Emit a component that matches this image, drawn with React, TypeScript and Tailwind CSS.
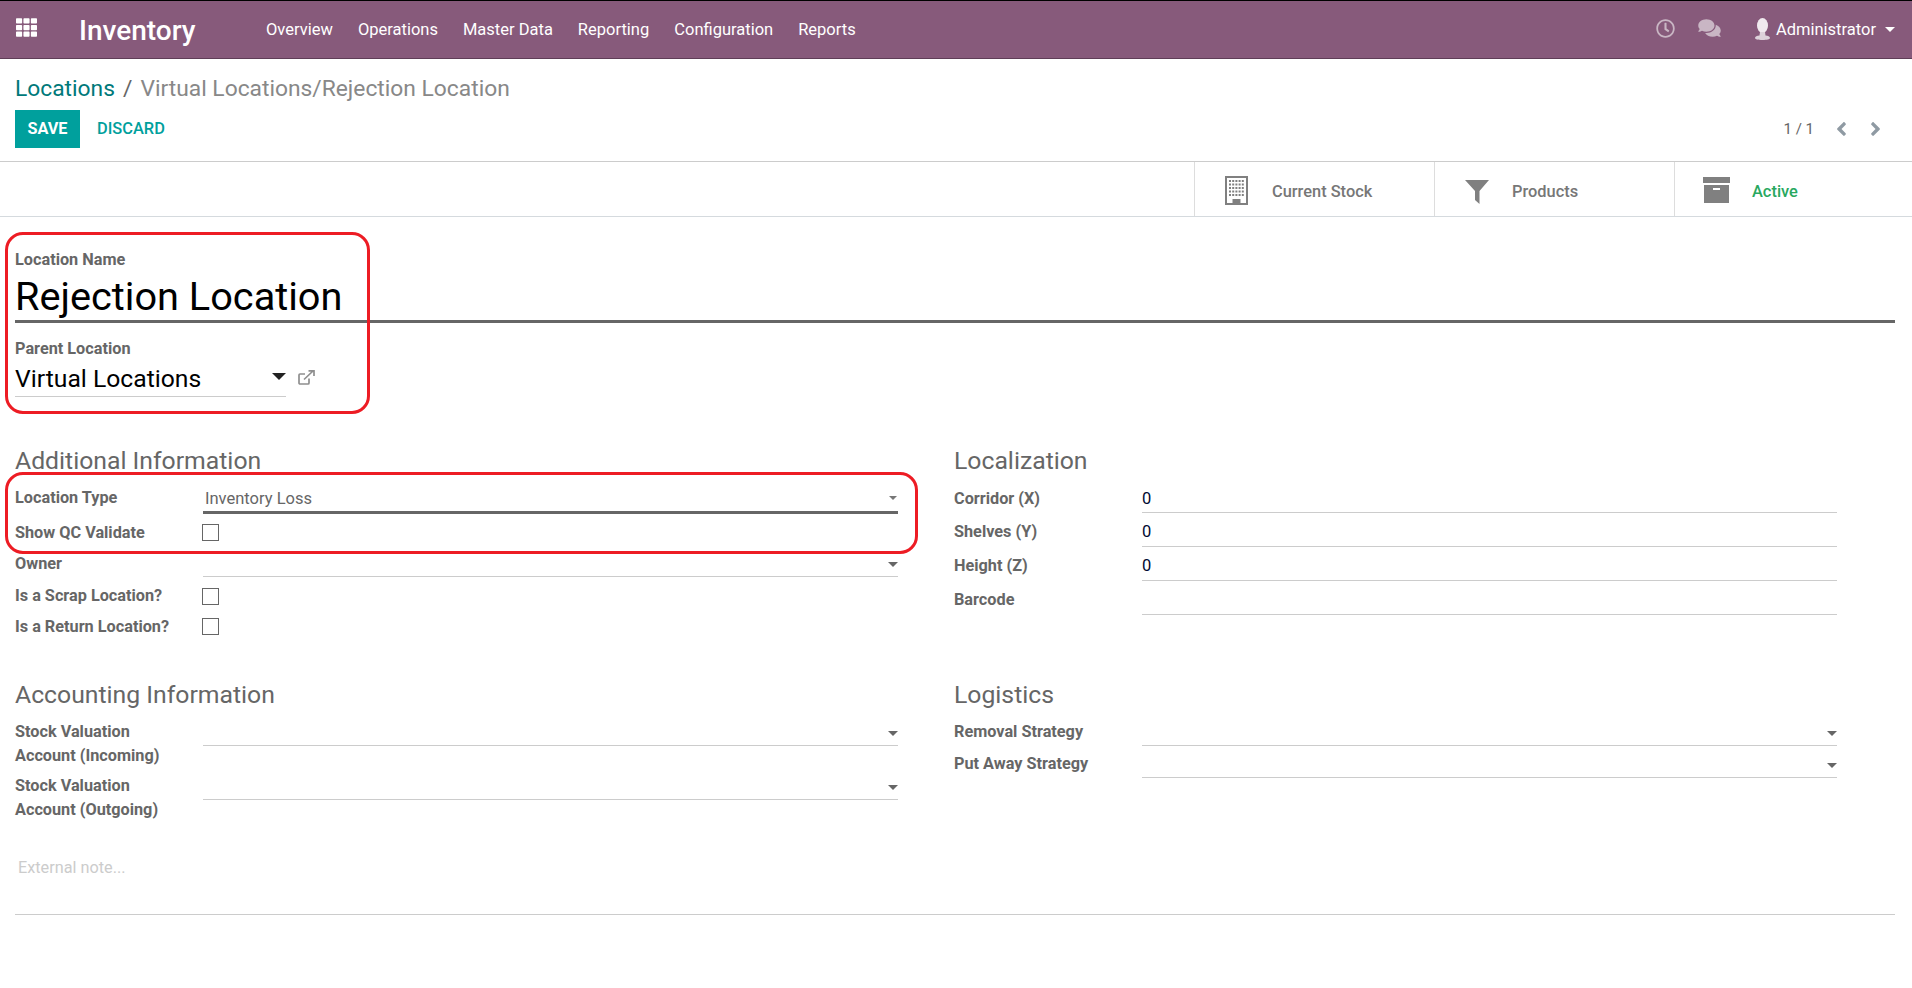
import React from "react";
import { FaTh, FaRegClock, FaComments, FaAngleLeft, FaAngleRight } from "react-icons/fa";

const Small = () => (
  <span className="absolute right-0 top-[11px] w-0 h-0 border-x-[5px] border-t-[5px] border-x-transparent border-t-[#666]" />
);

const Label = ({ children }: { children: React.ReactNode }) => (
  <div className="w-[188px] shrink-0 text-[16.250px] leading-[24px] font-bold text-[#666] pr-3">{children}</div>
);

const Check = () => <span className="block w-[17px] h-[17px] border border-[#666] bg-white ml-[-1px]" />;

const TextRow = ({ label, value, h }: { label: string; value?: string; h: string }) => (
  <div className={`flex ${h}`}>
    <Label><span className="block pt-[7px]">{label}</span></Label>
    <div className="flex-1 border-b border-[#ccc] text-[16.500px] leading-[24px] text-[#000a33] pt-[7px]">{value}</div>
  </div>
);

const CaretRow = ({ label, h, pt }: { label: React.ReactNode; h: string; pt?: string }) => (
  <div className={`flex ${h}`}>
    <Label><div className={pt}>{label}</div></Label>
    <div className="flex-1 relative border-b border-[#ccc] h-[26px]"><Small /></div>
  </div>
);

const Building = () => (
  <svg width="23" height="29" viewBox="0 0 23 29">
    <path fill="#808080" d="M0 0h23v29H0z" />
    <path fill="#fff" d="M2 2h19v25h-5.500v-4h-8v4H2z" />
    {[4, 7.500, 11, 14.500, 18].map((y) =>
      [4, 7.200, 10.400, 13.600, 16.800].map((x) => <rect key={`${x}-${y}`} x={x} y={y} width="2" height="2" fill="#808080" />)
    )}
  </svg>
);

const Archive = () => (
  <svg width="27" height="26" viewBox="0 0 27 26">
    <path fill="#808080" d="M0 0h27v6H0zM1 8h25v18H1z" />
    <path fill="#fff" d="M10 11h7v2h-7z" />
  </svg>
);

const Funnel = () => (
  <svg width="24" height="24" viewBox="0 0 24 24" className="mt-[3px]">
    <path fill="#808080" d="M0 0h24L14.500 11v13L10 20v-9z" />
  </svg>
);

const ExternalLink = () => (
  <svg width="17" height="15" viewBox="0 0 17 15" fill="none" stroke="#8f8f8f" strokeWidth="1.700">
    <path d="M11 8.500V13a1 1 0 0 1-1 1H2a1 1 0 0 1-1-1V5a1 1 0 0 1 1-1h5" />
    <path d="M6 9.500 15 1M10.500 .8H16V6" />
  </svg>
);

const User = () => (
  <svg width="17" height="22" viewBox="0 0 17 22">
    <ellipse cx="8.500" cy="7.500" rx="5.500" ry="7.500" fill="#f0e9ee" />
    <path d="M6 14h5l.5 3.500c2.500.3 4.500 1 4.500 2.500 0 1.200-3 2-7.500 2S1 21.200 1 20c0-1.500 2-2.200 4.500-2.500z" fill="#ddd2da" />
  </svg>
);

const Stat = ({ icon, text, active, w }: { icon: React.ReactNode; text: string; active?: boolean; w: string }) => (
  <div className={`flex items-center ${w} h-full border-l border-[#ddd]`}>
    <div className="w-[77px] shrink-0 flex justify-center pl-[6px] pt-[2px]">{icon}</div>
    <span className={`pt-[7px] text-[16.400px] font-medium ${active ? "text-[#28a860]" : "text-[#777]"}`}>{text}</span>
  </div>
);

export default function App() {
  return (
    <div className="min-h-[988px] bg-white relative overflow-hidden" style={{ fontFamily: "Roboto, sans-serif" }}>
      <header className="h-[59px] bg-[#875a7b] border-t-[1px] border-t-black border-b border-b-[#5f3e57] flex items-center text-white">
        <FaTh className="ml-[15px] w-[23px] h-[21px] mb-[4px] text-white" />
        <span className="ml-[41px] text-[28px] font-medium leading-none w-[187px] pt-[2px]">Inventory</span>
        <nav className="flex gap-[25px] text-[16.500px] pt-[2px]">
          {["Overview", "Operations", "Master Data", "Reporting", "Configuration", "Reports"].map((n) => (
            <span key={n}>{n}</span>
          ))}
        </nav>
        <div className="ml-auto flex items-center mr-[17px] mb-[1px]">
          <FaRegClock className="w-[19px] h-[19px] mb-[2px] text-[#c9b6c4]" />
          <FaComments className="ml-[23px] w-[23px] h-[20px] mb-[2px] text-[#c9b6c4]" />
          <span className="ml-[33px] mr-[5px]"><User /></span>
          <span className="text-[16.500px] pt-[2px]">Administrator</span>
          <span className="ml-[9px] w-0 h-0 border-x-[5px] border-t-[5px] border-x-transparent border-t-white" />
        </div>
      </header>

      <div className="h-[103px] border-b border-[#ccc] px-[15px] pt-[14px]">
        <div className="text-[22.800px] leading-[32px] text-[#888]">
          <span className="text-[#00797a]">Locations</span>
          <span className="mx-[8px] text-[#666]">/</span>
          Virtual Locations/Rejection Location
        </div>
        <div className="flex items-center mt-[5px]">
          <button className="w-[65px] h-[38px] bg-[#00a09d] text-white text-[16.250px] font-bold">SAVE</button>
          <span className="ml-[17px] text-[16.400px] font-medium text-[#00a09d]">DISCARD</span>
          <div className="ml-auto flex items-center text-[15px] text-[#666] mr-[14px]">
            <span>1 / 1</span>
            <FaAngleLeft className="ml-[20px] w-[15px] h-[22px] text-[#8f9aa3]" />
            <FaAngleRight className="ml-[19px] w-[15px] h-[22px] text-[#8f9aa3]" />
          </div>
        </div>
      </div>

      <div className="h-[55px] border-b border-[#d5dade] flex justify-end">
        <Stat w="w-[240px]" icon={<Building />} text="Current Stock" />
        <Stat w="w-[240px]" icon={<Funnel />} text="Products" />
        <Stat w="w-[238px]" icon={<Archive />} text="Active" active />
      </div>

      <main className="px-[15px] pt-[31px]">
        <div className="text-[16.250px] leading-[24px] font-bold text-[#666] h-[22px]">Location Name</div>
        <div className="text-[39.700px] leading-[46px] text-black border-b-[3px] border-[#666] h-[50px] mr-[2px] pt-[1px] mt-[3px]">
          Rejection Location
        </div>
        <div className="text-[16.250px] leading-[24px] font-bold text-[#666] mt-[14px]">Parent Location</div>
        <div className="flex mt-[2px]">
          <div className="w-[271px] h-[34px] border-b border-[#ccc] relative text-[24.700px] leading-[32px] text-black">
            Virtual Locations
            <span className="absolute right-0 top-[10px] w-0 h-0 border-x-[7px] border-t-[7px] border-x-transparent border-t-[#222]" />
          </div>
          <span className="ml-[12px] mt-[7px]"><ExternalLink /></span>
        </div>

        <div className="flex gap-[56px] mr-[60px] mt-[48px]">
          <section className="w-[883px]">
            <h2 className="text-[24.750px] leading-[32px] text-[#666] h-[35px]">Additional Information</h2>
            <div className="flex h-[34px]">
              <Label><span className="block pt-[6px]">Location Type</span></Label>
              <div className="flex-1 relative border-b-[3px] border-[#666] text-[16.500px] leading-[24px] text-[#666] pl-[2px] pt-[7px]">
                Inventory Loss
                <span className="absolute right-[1px] top-[16px] w-0 h-0 border-x-[4px] border-t-[4px] border-x-transparent border-t-[#777]" />
              </div>
            </div>
            <div className="flex items-center h-[37px]"><Label>Show QC Validate</Label><Check /></div>
            <CaretRow h="h-[27px]" label="Owner" pt="pt-[1px]" />
            <div className="flex items-center h-[36px]"><Label>Is a Scrap Location?</Label><Check /></div>
            <div className="flex items-center h-[25px]"><Label>Is a Return Location?</Label><Check /></div>

            <h2 className="text-[24.750px] leading-[32px] text-[#666] h-[41px] mt-[40px]">Accounting Information</h2>
            <CaretRow h="h-[54px]" label={<><div>Stock Valuation</div><div>Account (Incoming)</div></>} />
            <CaretRow h="h-[54px]" label={<><div>Stock Valuation</div><div>Account (Outgoing)</div></>} />
          </section>
          <section className="flex-1">
            <h2 className="text-[24.750px] leading-[32px] text-[#666] h-[35px]">Localization</h2>
            <TextRow h="h-[33px]" label="Corridor (X)" value="0" />
            <TextRow h="h-[34px]" label="Shelves (Y)" value="0" />
            <TextRow h="h-[34px]" label="Height (Z)" value="0" />
            <TextRow h="h-[34px]" label="Barcode" />
            <h2 className="text-[24.750px] leading-[32px] text-[#666] h-[41px] mt-[64px]">Logistics</h2>
            <CaretRow h="h-[32px]" label="Removal Strategy" />
            <CaretRow h="h-[32px]" label="Put Away Strategy" />
          </section>
        </div>

        <div className="border-b border-[#ccc] mr-[2px] h-[69px] mt-[18px] pl-[3px] text-[16.250px] text-[#ccc] pt-[10px]">External note...</div>
      </main>

      <div className="absolute left-[5px] top-[232px] w-[365px] h-[182px] border-[3px] border-[#ed1c24] rounded-[18px] pointer-events-none" />
      <div className="absolute left-[5px] top-[472px] w-[913px] h-[82px] border-[3px] border-[#ed1c24] rounded-[18px] pointer-events-none" />
    </div>
  );
}
